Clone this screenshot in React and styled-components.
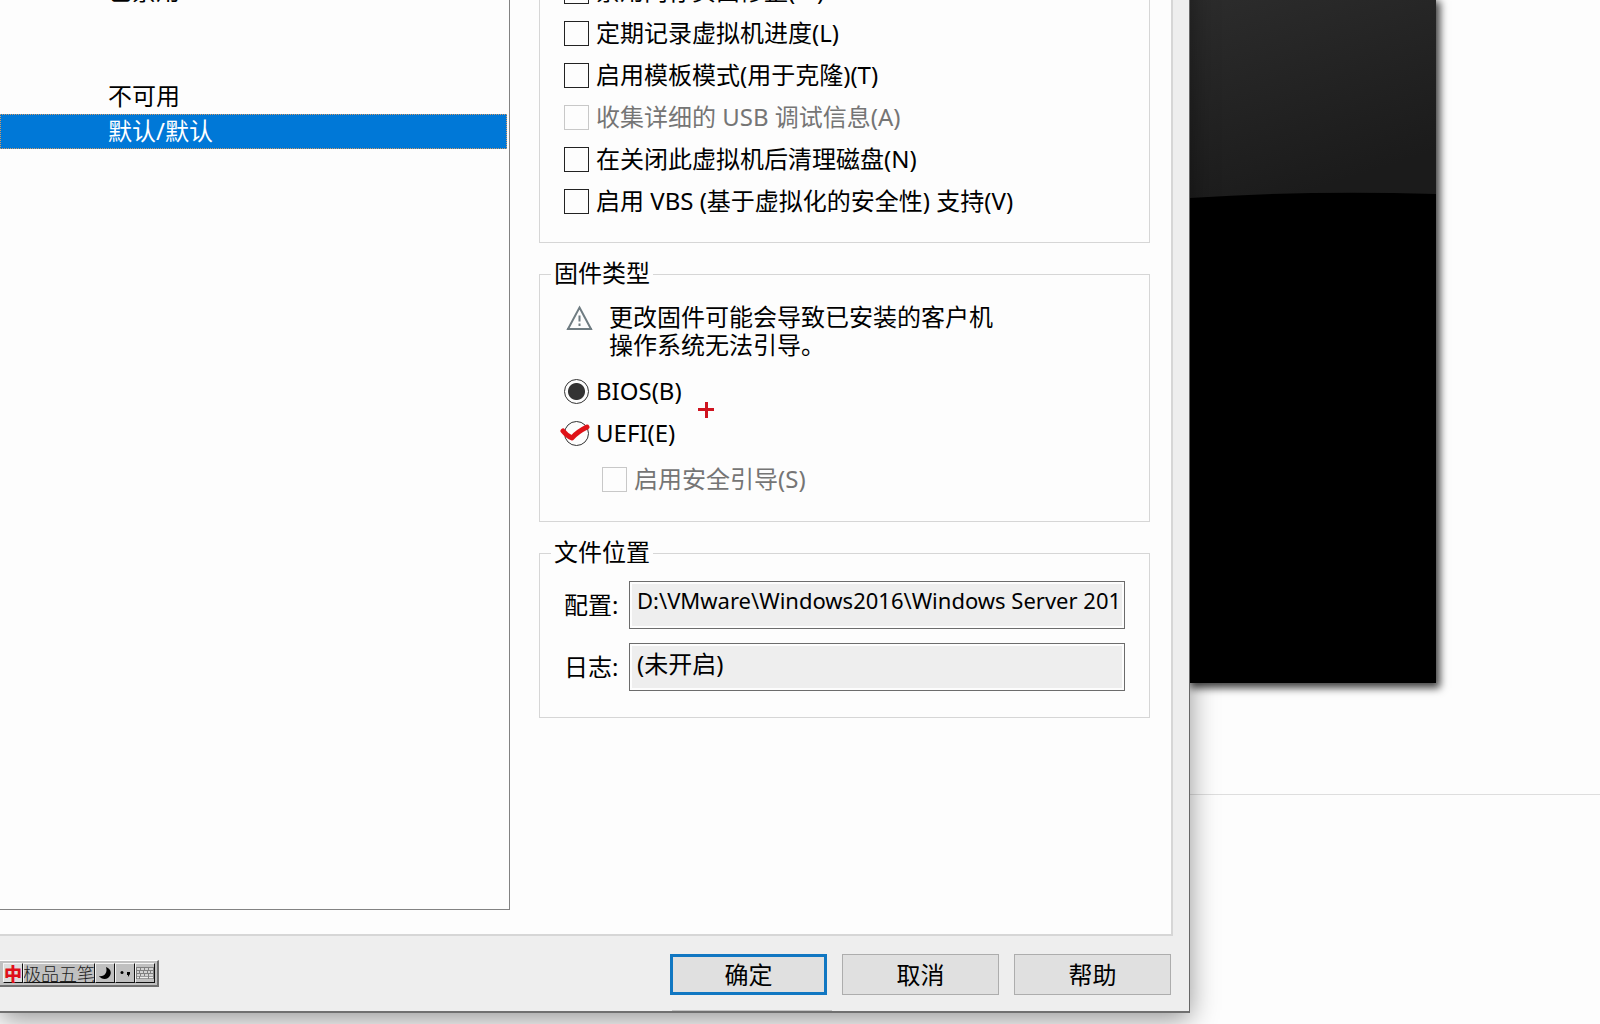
import React from "react";
import styled, { createGlobalStyle, css } from "styled-components";

const GlobalStyle = createGlobalStyle`
  *, *::before, *::after { box-sizing: border-box; }
  body {
    margin: 0;
    background: #fdfdfd;
    color: #000;
    font: 24px/28px "Noto Sans", "Noto Sans CJK SC", sans-serif;
  }
  button, input { font: inherit; color: inherit; }
`;

const Page = styled.div`
  display: grid;
  grid-template-columns: 119fr 41fr;
  height: 100vh;
  overflow: hidden;
`;

/* The dialog reaches past the top edge of the view. */
const Dialog = styled.main`
  position: relative;
  z-index: 1;
  display: flex;
  flex-direction: column;
  margin: -30px 0 11px;
  background: #eee;
  border-right: 1px solid #666;
  border-bottom: 2px solid #707070;
  box-shadow: 0 6px 26px rgba(0, 0, 0, 0.42);
`;

const Body = styled.div`
  flex: 1;
  display: grid;
  grid-template-columns: 510fr 611fr;
  gap: 29px;
  margin-right: 16px;
  padding: 0 21px 24px 0;
  background: #fdfdfd;
  border-right: 2px solid #d6d6d6;
  border-bottom: 2px solid #d6d6d6;
`;

const SummaryList = styled.ul`
  margin: 0;
  padding: 4px 2px 0 0;
  list-style: none;
  border-right: 1px solid #828282;
  border-bottom: 1px solid #828282;
`;

const SummaryRow = styled.li`
  display: flex;
  align-items: center;
  height: 35px;
  padding: 0 0 2px 108px;
  ${(p) =>
    p.$selected &&
    css`
      color: #fff;
      background: #0078d7;
      outline: 1px dotted #d09a68;
      outline-offset: -1px;
    `}
`;

const Groups = styled.div`
  display: flex;
  flex-direction: column;
  gap: 15px;
  min-width: 0;
`;

const Group = styled.fieldset`
  min-width: 0;
  margin: 0;
  padding: ${(p) => p.$padding};
  border: 1px solid #d6d6d6;
  ${(p) => p.$open && "border-top: 0;"}
`;

const Legend = styled.legend`
  margin-left: -13px;
  padding: 0 3px 2px;
  line-height: 30px;
`;

const Option = styled.label`
  position: relative;
  display: flex;
  align-items: center;
  gap: 7px;
  height: 42px;
  white-space: nowrap;
  color: ${(p) => (p.$disabled ? "#757575" : "#000")};
`;

const Nested = styled.div`
  padding: 4px 0 0 38px;
`;

const Checkbox = styled.input.attrs({ type: "checkbox" })`
  appearance: none;
  flex: none;
  width: 25px;
  height: 25px;
  margin: 0;
  background: #fdfdfd;
  border: 1px solid #222;
  &:disabled { border-color: #c8c8c8; }
`;

const Radio = styled.input.attrs({ type: "radio" })`
  appearance: none;
  flex: none;
  width: 25px;
  height: 25px;
  margin: 0;
  border: 1px solid #333;
  border-radius: 50%;
  &:checked {
    background: radial-gradient(circle, #333 0 8px, transparent 9px);
  }
`;

const Warning = styled.div`
  display: flex;
  gap: 16px;
  padding-left: 2px;
  margin-bottom: 11px;
`;

const WarningIcon = styled.svg`
  flex: none;
  width: 27px;
  height: 28px;
`;

const WarningText = styled.p`
  margin: 0;
`;

const FirmwareChoices = styled.div`
  position: relative;
`;

const Tick = styled.svg`
  position: absolute;
  left: -4px;
  top: 11px;
  width: 30px;
  height: 20px;
`;

const Plus = styled.svg`
  position: absolute;
  left: 134px;
  top: 32px;
  width: 16px;
  height: 16px;
`;

const Fields = styled.div`
  display: flex;
  flex-direction: column;
  gap: 14px;
`;

const Field = styled.div`
  display: grid;
  grid-template-columns: 65px 1fr;
  align-items: center;
`;

const PathInput = styled.input`
  width: 100%;
  min-width: 0;
  height: 48px;
  padding: 0 6px 10px 7px;
  font-size: ${(p) => (p.$small ? 22 : 24)}px;
  background: #eee;
  border: 1px solid #6c6c6c;
  border-radius: 0;
  box-shadow: inset 0 0 0 2px #fdfdfd;
`;

const Footer = styled.footer`
  position: relative;
  display: flex;
  align-items: center;
  justify-content: space-between;
  padding: 18px 18px 16px 0;
`;

const EdgeMark = styled.span`
  position: absolute;
  right: 357px;
  bottom: 0;
  width: 160px;
  height: 1px;
  background: #c4c4c4;
`;

const Actions = styled.div`
  display: flex;
  gap: 15px;
`;

const Button = styled.button`
  width: 157px;
  height: 41px;
  padding: 0;
  background: #e0e0e0;
  border: ${(p) => (p.$primary ? "3px solid #1177c2" : "1px solid #adadad")};
`;

const ImeBar = styled.div`
  display: flex;
  margin-bottom: 2px;
  padding: 2px 2px 2px 3px;
  background: #c0c0c0;
  border: 1px solid #fff;
  border-right: 2px solid #707070;
  border-bottom: 2px solid #707070;
  border-left: 0;
`;

const ImeButton = styled.button`
  display: flex;
  align-items: center;
  justify-content: center;
  width: ${(p) => (p.$wide ? 72 : 20)}px;
  height: 20px;
  padding: 0;
  overflow: ${(p) => (p.$wide ? "hidden" : "visible")};
  font: ${(p) => (p.$strong ? "900" : "300")} 18px/18px "Noto Sans CJK SC", sans-serif;
  white-space: nowrap;
  color: ${(p) => (p.$strong ? "#e0101a" : "#222")};
  background: ${(p) => (p.$strong ? "#ddd" : "#c0c0c0")};
  border: 1px solid #f4f4f4;
  border-right-color: #111;
  border-bottom-color: #111;
  svg { flex: none; }
`;

const Backdrop = styled.aside`
  min-width: 0;
`;

const Screen = styled.div`
  width: 60%;
  height: 683px;
  background: #000;
  box-shadow: 2px 3px 8px 2px rgba(0, 0, 0, 0.75);
`;

const Gloss = styled.svg`
  display: block;
  width: 100%;
  height: 199px;
`;

const Divider = styled.hr`
  margin: 111px 0 0;
  border: 0;
  border-top: 1px solid #dedede;
`;

const SUMMARY = [
  { id: "vnc", text: "已禁用" },
  { id: "unity", text: "" },
  { id: "view", text: "" },
  { id: "login", text: "不可用" },
  { id: "advanced", text: "默认/默认", selected: true },
];

const SETTINGS = [
  { id: "trim", text: "禁用内存页面修整(M)" },
  { id: "log", text: "定期记录虚拟机进度(L)" },
  { id: "template", text: "启用模板模式(用于克隆)(T)" },
  { id: "usb", text: "收集详细的 USB 调试信息(A)", disabled: true },
  { id: "clean", text: "在关闭此虚拟机后清理磁盘(N)" },
  { id: "vbs", text: "启用 VBS (基于虚拟化的安全性) 支持(V)" },
];

function CheckOption({ text, disabled }) {
  return (
    <Option $disabled={disabled}>
      <Checkbox disabled={disabled} />
      <span>{text}</span>
    </Option>
  );
}

export default function App() {
  return (
    <>
      <GlobalStyle />
      <Page>
        <Dialog>
          <Body>
            <SummaryList>
              {SUMMARY.map((row) => (
                <SummaryRow key={row.id} $selected={row.selected}>{row.text}</SummaryRow>
              ))}
            </SummaryList>
            <Groups>
              <Group $open $padding="0 24px 20px">
                {SETTINGS.map((s) => (
                  <CheckOption key={s.id} text={s.text} disabled={s.disabled} />
                ))}
              </Group>
              <Group $padding="13px 24px 21px">
                <Legend>固件类型</Legend>
                <Warning>
                  <WarningIcon viewBox="0 0 27 28" aria-hidden="true">
                    <path d="M13.5 4.5 25 26H2Z" fill="#fdfdfd" stroke="#6f7c82" strokeWidth="2" />
                    <path d="M1 26H26" stroke="#6f7c82" strokeWidth="2" />
                    <path d="M13.5 12.5v6M13.5 20.5v2.5" stroke="#6f7c82" strokeWidth="2" />
                  </WarningIcon>
                  <WarningText>更改固件可能会导致已安装的客户机<br />操作系统无法引导。</WarningText>
                </Warning>
                <FirmwareChoices>
                  <Option>
                    <Radio name="firmware" defaultChecked />
                    <span>BIOS(B)</span>
                  </Option>
                  <Option>
                    <Radio name="firmware" />
                    <span>UEFI(E)</span>
                    <Tick viewBox="0 0 30 20" aria-hidden="true">
                      <path d="M3 8Q7 13 12 15Q17 9 27 4" fill="none" stroke="#df1218" strokeWidth="5" strokeLinejoin="round" strokeLinecap="round" />
                    </Tick>
                  </Option>
                  <Plus viewBox="0 0 16 16" aria-hidden="true">
                    <path d="M8.500 0V16M0 7.500H16" stroke="#cf1420" strokeWidth="3" />
                  </Plus>
                </FirmwareChoices>
                <Nested>
                  <CheckOption text="启用安全引导(S)" disabled />
                </Nested>
              </Group>
              <Group $padding="12px 24px 26px">
                <Legend>文件位置</Legend>
                <Fields>
                  <Field>
                    <label htmlFor="config">配置:</label>
                    <PathInput id="config" $small readOnly value={"D:\\VMware\\Windows2016\\Windows Server 2016.vmx"} />
                  </Field>
                  <Field>
                    <label htmlFor="log">日志:</label>
                    <PathInput id="log" readOnly value="(未开启)" />
                  </Field>
                </Fields>
              </Group>
            </Groups>
          </Body>
          <Footer>
            <ImeBar>
              <ImeButton $strong>中</ImeButton>
              <ImeButton $wide>极品五笔</ImeButton>
              <ImeButton aria-label="半角">
                <svg width="14" height="14" viewBox="0 0 14 14">
                  <path d="M8 1C14 3 14 9 10 12C7 14 3 13 1 10C6 11 10 7 8 1Z" fill="#000" />
                </svg>
              </ImeButton>
              <ImeButton aria-label="标点">
                <svg width="14" height="14" viewBox="0 0 14 14">
                  <circle cx="4" cy="6.500" r="1.500" fill="#000" />
                  <path d="M9 6h3v2l-2 3v-2h-1z" fill="#000" />
                </svg>
              </ImeButton>
              <ImeButton aria-label="键盘">
                <svg width="18" height="12" viewBox="0 0 18 12">
                  <path d="M0 0H18V12H0Z" fill="#808080" />
                  <path d="M1 2h3m1 0h3m1 0h3m1 0h4M1 5h2m1 0h3m1 0h3m1 0h2m1 0h2M1 8h3m1 0h3m1 0h3m1 0h4M1 10.500h2m1 0h8m1 0h4" stroke="#eee" strokeWidth="1.500" />
                </svg>
              </ImeButton>
            </ImeBar>
            <Actions>
              <Button $primary>确定</Button>
              <Button>取消</Button>
              <Button>帮助</Button>
            </Actions>
            <EdgeMark />
          </Footer>
        </Dialog>
        <Backdrop>
          <Screen>
            <Gloss viewBox="0 0 247 199" preserveAspectRatio="none" aria-hidden="true">
              <defs>
                <linearGradient id="gloss" x1="0" y1="0" x2="0.4" y2="1">
                  <stop offset="0" stopColor="#2c2c2c" />
                  <stop offset="1" stopColor="#1b1b1b" />
                </linearGradient>
              </defs>
              <path d="M0 0H247V194Q120 190 0 198Z" fill="url(#gloss)" />
            </Gloss>
          </Screen>
          <Divider />
        </Backdrop>
      </Page>
    </>
  );
}
